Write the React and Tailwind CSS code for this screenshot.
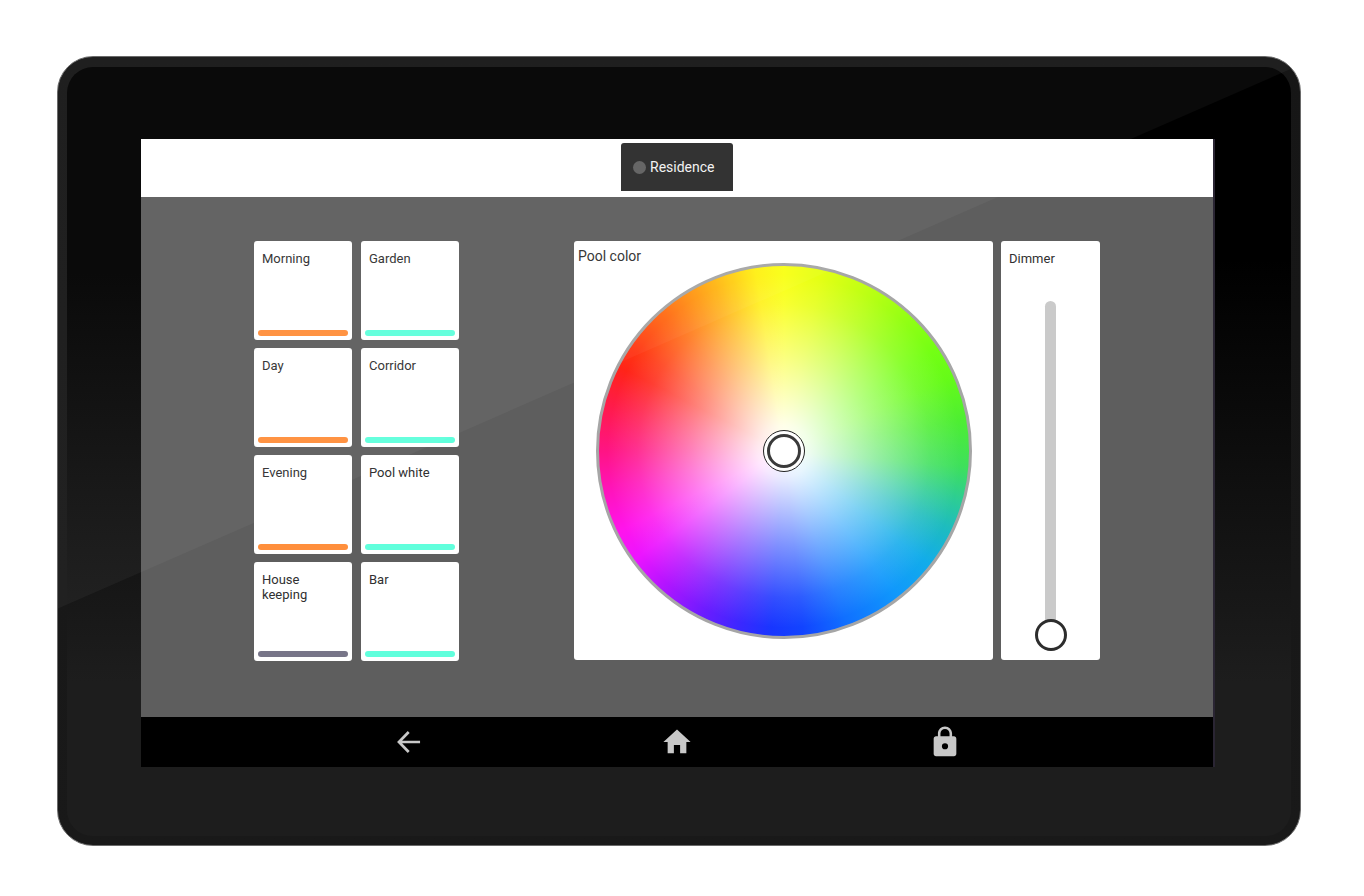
const scenes = [
  { name: 'Morning', bar: 'bg-[#ff8f3c]' },
  { name: 'Garden', bar: 'bg-[#60ffdc]' },
  { name: 'Day', bar: 'bg-[#ff8f3c]' },
  { name: 'Corridor', bar: 'bg-[#60ffdc]' },
  { name: 'Evening', bar: 'bg-[#ff8f3c]' },
  { name: 'Pool white', bar: 'bg-[#60ffdc]' },
  { name: 'House keeping', bar: 'bg-[#777588]' },
  { name: 'Bar', bar: 'bg-[#60ffdc]' },
];

function SceneTile({ name, bar }) {
  return (
    <button
      type="button"
      className="flex h-[99px] w-[98px] flex-col justify-between rounded-[3px] bg-white p-1 text-left"
    >
      <span className="px-1 pt-[6px] text-[13px] leading-[15px]">{name}</span>
      <span className={'h-[6px] w-full rounded-full ' + bar} />
    </button>
  );
}

function ColorWheel() {
  return (
    <section className="grid size-[419px] rounded-[3px] bg-white">
      <h2 className="col-start-1 row-start-1 px-1 pt-[6px] text-[14px] leading-[18px]">Pool color</h2>
      <div className="col-start-1 row-start-1 grid size-[376px] place-items-center place-self-center rounded-full border-[3px] border-[#a6a6a6] bg-[radial-gradient(circle_closest-side,#fff_0%,rgba(255,255,255,0.9)_14%,rgba(255,255,255,0.45)_50%,rgba(255,255,255,0.12)_78%,rgba(255,255,255,0)_94%),conic-gradient(#f9ff14_0deg,#e4ff14_12deg,#bcff14_28deg,#90ff14_44deg,#74ff14_56deg,#66fb18_66deg,#4eee32_80deg,#3ee05c_95deg,#2ccc96_106deg,#1ebcbe_115deg,#12acea_128deg,#1098fc_142deg,#1070ff_160deg,#1244ff_174deg,#1836ff_184deg,#3a28ff_194deg,#6a1cff_206deg,#b414ff_222deg,#ec14ff_234deg,#ff14ec_244deg,#ff14b8_258deg,#ff1484_270deg,#ff1c44_286deg,#ff2418_297deg,#ff3a14_305deg,#ff7014_320deg,#ffb414_337deg,#fff014_351deg,#f9ff14_360deg)] bg-origin-border">
        <button
          type="button"
          aria-label="Pick color"
          className="grid size-[42px] place-items-center rounded-full border border-[#222222] bg-white"
        >
          <span className="size-[34px] rounded-full border-[3px] border-[#3a3a3a]" />
        </button>
      </div>
    </section>
  );
}

function Dimmer() {
  return (
    <section className="flex h-[419px] w-[99px] flex-col items-center justify-between rounded-[3px] bg-white px-2 pt-[10px] pb-[9px]">
      <label htmlFor="dimmer" className="w-full text-[13px] leading-[15px]">
        Dimmer
      </label>
      <input
        id="dimmer"
        type="range"
        defaultValue="0"
        className="h-[350px] w-8 appearance-none bg-transparent [direction:rtl] [writing-mode:vertical-lr] [&::-webkit-slider-runnable-track]:h-full [&::-webkit-slider-runnable-track]:w-[11px] [&::-webkit-slider-runnable-track]:rounded-full [&::-webkit-slider-runnable-track]:bg-[#cacaca] [&::-webkit-slider-thumb]:-ml-[10px] [&::-webkit-slider-thumb]:size-8 [&::-webkit-slider-thumb]:appearance-none [&::-webkit-slider-thumb]:rounded-full [&::-webkit-slider-thumb]:border-[3px] [&::-webkit-slider-thumb]:border-[#2d2d2d] [&::-webkit-slider-thumb]:bg-white"
      />
    </section>
  );
}

function NavButton({ label, children }) {
  return (
    <button type="button" aria-label={label} className="grid place-items-center text-[#c8c8c8]">
      <svg viewBox="0 0 24 24" className="size-[34px]" fill="currentColor" aria-hidden="true">
        {children}
      </svg>
    </button>
  );
}

export default function App() {
  return (
    <div className="flex min-h-screen bg-white pt-14 pr-[63px] pb-[50px] pl-[57px] font-['Roboto',sans-serif] text-[#303030]">
      <div className="relative flex flex-1 overflow-hidden rounded-[36px] border border-[#6a6a6a] bg-[linear-gradient(#161616,#191919)] px-[9px] pt-[10px] pb-[9px]">
        <div className="flex flex-1 rounded-[26px] bg-[linear-gradient(#000_25%,#1d1d1d_80%)] pt-[72px] pr-[76px] pb-[69px] pl-[74px]">
          <div className="flex flex-1 flex-col border-r-2 border-[#2a2533]">
            <header className="flex h-[58px] justify-center bg-white pt-1">
              <button
                type="button"
                className="flex h-12 w-28 items-center gap-1 rounded-t-[3px] bg-[#2b2b2b] pl-3 text-[14px] text-[#f2f2f2]"
              >
                <span className="size-[13px] rounded-full bg-[#606060]" />
                Residence
              </button>
            </header>
            <main className="flex flex-1 items-start justify-between bg-[#5e5e5e] px-[113px] pt-11 pb-14">
              <div className="grid grid-cols-2 gap-x-[9px] gap-y-2">
                {scenes.map((s) => (
                  <SceneTile key={s.name} name={s.name} bar={s.bar} />
                ))}
              </div>
              <div className="flex gap-2">
                <ColorWheel />
                <Dimmer />
              </div>
            </main>
            <nav className="h-[50px] bg-black px-[12.5%]">
              <div className="grid h-full grid-cols-3">
                <NavButton label="Back">
                  <path
                    d="M19.800 12H5M11.800 4.900L4.900 12l6.900 7.100"
                    fill="none"
                    stroke="currentColor"
                    strokeWidth="1.900"
                  />
                </NavButton>
                <NavButton label="Home">
                  <path d="M9.8 20v-5.8h4.4V20h4.4v-8h3L12 3.2 2.4 12h3v8z" />
                </NavButton>
                <NavButton label="Lock">
                  <path d="M18.300 8H17V6c0-2.760-2.240-5-5-5S7 3.240 7 6v2H5.700C4.700 8 4 8.700 4 9.700v10.600c0 1 .7 1.700 1.700 1.700h12.600c1 0 1.700-.7 1.700-1.700V9.700c0-1-.7-1.700-1.700-1.700zM12 17.200a2.200 2.200 0 1 1 0-4.400 2.200 2.200 0 0 1 0 4.400zM15.200 8H8.800V6c0-1.770 1.430-3.200 3.200-3.200s3.200 1.430 3.200 3.200z" />
                </NavButton>
              </div>
            </nav>
          </div>
        </div>
        <div className="pointer-events-none absolute inset-0 bg-white/4 [clip-path:polygon(0_0,100%_0,100%_1%,0_70%)]" />
      </div>
    </div>
  );
}
